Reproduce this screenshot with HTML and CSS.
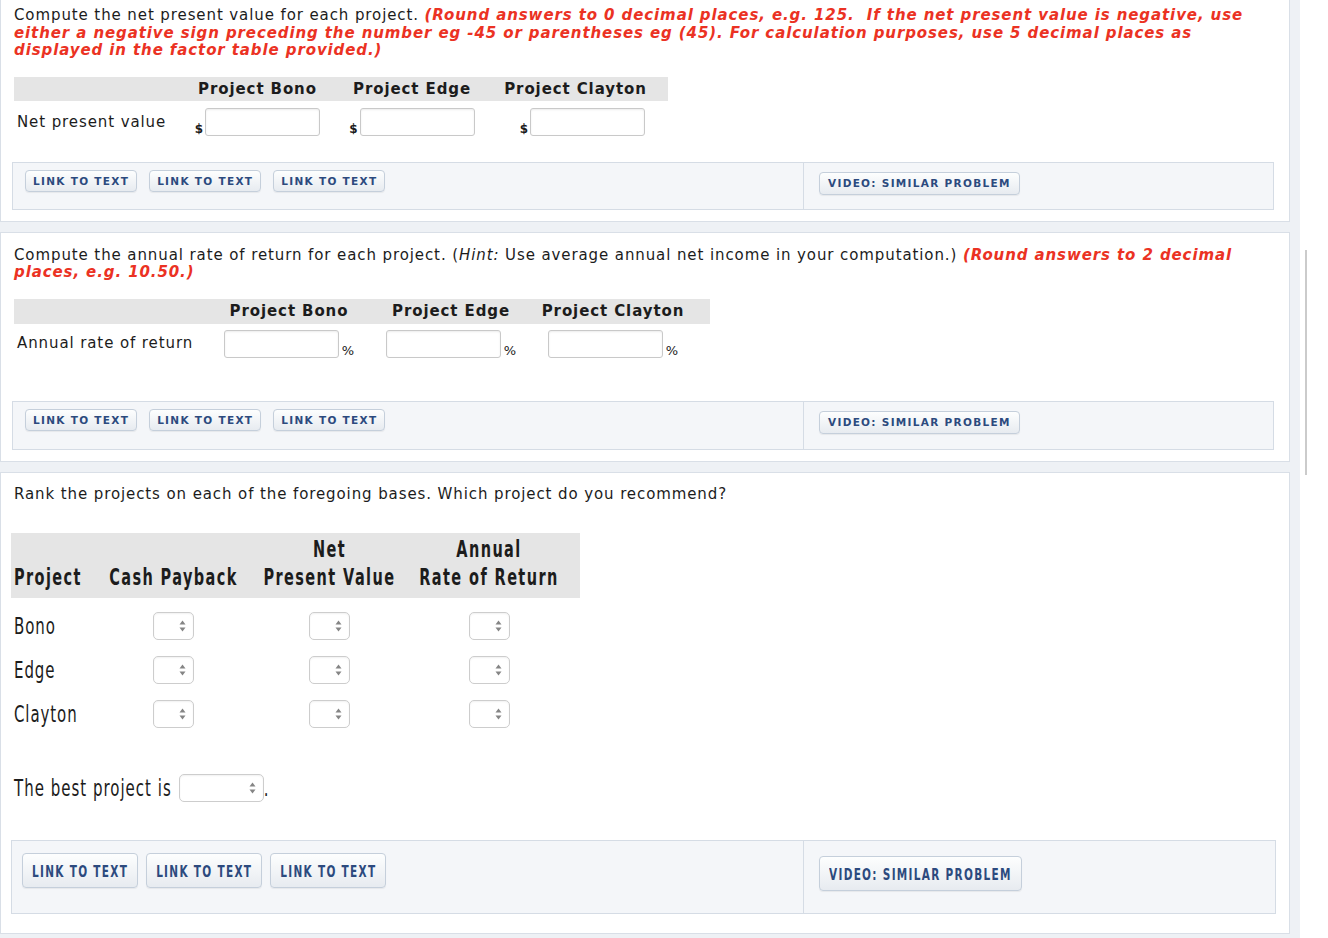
FILE: index.html
```html
<!DOCTYPE html>
<html lang="en">

<head>
    <meta charset="UTF-8">
    <meta name="viewport" content="width=device-width, initial-scale=1.0">
    <title>Capital budgeting: Bono, Edge, Clayton</title>
    <link rel="stylesheet" href="styles.css">
</head>

<body>
    <div class="page">
        <div class="main">

            <!-- Part: net present value -->
            <div class="panel panel-npv">
                <p class="prompt">Compute the net present value for each project. <em class="note">(Round answers to 0 decimal places, e.g. 125.&nbsp; If the net present value is negative, use<br>either a negative sign preceding the number eg -45 or parentheses eg (45). For calculation purposes, use 5 decimal places as<br>displayed in the factor table provided.)</em></p>

                <table class="grid grid-npv">
                    <colgroup>
                        <col class="col-label">
                        <col class="col-a">
                        <col class="col-b">
                        <col class="col-c">
                    </colgroup>
                    <thead>
                        <tr>
                            <th></th>
                            <th>Project Bono</th>
                            <th>Project Edge</th>
                            <th class="last">Project Clayton</th>
                        </tr>
                    </thead>
                    <tbody>
                        <tr>
                            <td class="row-label">Net present value</td>
                            <td><span class="cur">$</span><input type="text" class="field"></td>
                            <td><span class="cur">$</span><input type="text" class="field"></td>
                            <td class="last"><span class="cur">$</span><input type="text" class="field"></td>
                        </tr>
                    </tbody>
                </table>

                <div class="links">
                    <div class="links-text">
                        <button class="btn" type="button">LINK TO TEXT</button>
                        <button class="btn" type="button">LINK TO TEXT</button>
                        <button class="btn" type="button">LINK TO TEXT</button>
                    </div>
                    <div class="links-video">
                        <button class="btn btn-video" type="button">VIDEO: SIMILAR PROBLEM</button>
                    </div>
                </div>
            </div>

            <!-- Part: annual rate of return -->
            <div class="panel panel-arr">
                <p class="prompt">Compute the annual rate of return for each project. (<i>Hint:</i> Use average annual net income in your computation.) <em class="note">(Round answers to 2 decimal<br>places, e.g. 10.50.)</em></p>

                <table class="grid grid-arr">
                    <colgroup>
                        <col class="col-label">
                        <col class="col-a">
                        <col class="col-b">
                        <col class="col-c">
                    </colgroup>
                    <thead>
                        <tr>
                            <th></th>
                            <th>Project Bono</th>
                            <th>Project Edge</th>
                            <th class="last">Project Clayton</th>
                        </tr>
                    </thead>
                    <tbody>
                        <tr>
                            <td class="row-label">Annual rate of return</td>
                            <td><input type="text" class="field"><span class="pct">%</span></td>
                            <td><input type="text" class="field"><span class="pct">%</span></td>
                            <td class="last"><input type="text" class="field"><span class="pct">%</span></td>
                        </tr>
                    </tbody>
                </table>

                <div class="links">
                    <div class="links-text">
                        <button class="btn" type="button">LINK TO TEXT</button>
                        <button class="btn" type="button">LINK TO TEXT</button>
                        <button class="btn" type="button">LINK TO TEXT</button>
                    </div>
                    <div class="links-video">
                        <button class="btn btn-video" type="button">VIDEO: SIMILAR PROBLEM</button>
                    </div>
                </div>
            </div>

            <!-- Part: ranking -->
            <div class="panel panel-rank">
                <p class="prompt">Rank the projects on each of the foregoing bases. Which project do you recommend?</p>

                <table class="grid grid-rank">
                    <colgroup>
                        <col class="col-label">
                        <col class="col-a">
                        <col class="col-b">
                        <col class="col-c">
                    </colgroup>
                    <thead>
                        <tr>
                            <th class="th-project"><span class="tall">Project</span></th>
                            <th><span class="tall">Cash Payback</span></th>
                            <th><span class="tall">Net<br>Present Value</span></th>
                            <th class="last"><span class="tall">Annual<br>Rate of Return</span></th>
                        </tr>
                    </thead>
                    <tbody>
                        <tr>
                            <td class="row-label"><span class="tall">Bono</span></td>
                            <td><span class="picker"><svg width="7" height="12" viewBox="0 0 7 12"><path d="M3.5 0.5L6.5 4.6H0.5Z M3.5 11.5L6.5 7.4H0.5Z" fill="#858585"/></svg></span></td>
                            <td><span class="picker"><svg width="7" height="12" viewBox="0 0 7 12"><path d="M3.5 0.5L6.5 4.6H0.5Z M3.5 11.5L6.5 7.4H0.5Z" fill="#858585"/></svg></span></td>
                            <td class="last"><span class="picker"><svg width="7" height="12" viewBox="0 0 7 12"><path d="M3.5 0.5L6.5 4.6H0.5Z M3.5 11.5L6.5 7.4H0.5Z" fill="#858585"/></svg></span></td>
                        </tr>
                        <tr>
                            <td class="row-label"><span class="tall">Edge</span></td>
                            <td><span class="picker"><svg width="7" height="12" viewBox="0 0 7 12"><path d="M3.5 0.5L6.5 4.6H0.5Z M3.5 11.5L6.5 7.4H0.5Z" fill="#858585"/></svg></span></td>
                            <td><span class="picker"><svg width="7" height="12" viewBox="0 0 7 12"><path d="M3.5 0.5L6.5 4.6H0.5Z M3.5 11.5L6.5 7.4H0.5Z" fill="#858585"/></svg></span></td>
                            <td class="last"><span class="picker"><svg width="7" height="12" viewBox="0 0 7 12"><path d="M3.5 0.5L6.5 4.6H0.5Z M3.5 11.5L6.5 7.4H0.5Z" fill="#858585"/></svg></span></td>
                        </tr>
                        <tr>
                            <td class="row-label"><span class="tall">Clayton</span></td>
                            <td><span class="picker"><svg width="7" height="12" viewBox="0 0 7 12"><path d="M3.5 0.5L6.5 4.6H0.5Z M3.5 11.5L6.5 7.4H0.5Z" fill="#858585"/></svg></span></td>
                            <td><span class="picker"><svg width="7" height="12" viewBox="0 0 7 12"><path d="M3.5 0.5L6.5 4.6H0.5Z M3.5 11.5L6.5 7.4H0.5Z" fill="#858585"/></svg></span></td>
                            <td class="last"><span class="picker"><svg width="7" height="12" viewBox="0 0 7 12"><path d="M3.5 0.5L6.5 4.6H0.5Z M3.5 11.5L6.5 7.4H0.5Z" fill="#858585"/></svg></span></td>
                        </tr>
                    </tbody>
                </table>

                <div class="best">
                    <span class="tall">The best project is</span>
                    <span class="picker picker-wide"><svg width="7" height="12" viewBox="0 0 7 12"><path d="M3.5 0.5L6.5 4.6H0.5Z M3.5 11.5L6.5 7.4H0.5Z" fill="#858585"/></svg></span><span class="tall">.</span>
                </div>

                <div class="links links-tall">
                    <div class="links-text">
                        <button class="btn" type="button"><span class="tall">LINK TO TEXT</span></button>
                        <button class="btn" type="button"><span class="tall">LINK TO TEXT</span></button>
                        <button class="btn" type="button"><span class="tall">LINK TO TEXT</span></button>
                    </div>
                    <div class="links-video">
                        <button class="btn btn-video" type="button"><span class="tall">VIDEO: SIMILAR PROBLEM</span></button>
                    </div>
                </div>
            </div>

        </div>

        <!-- window scrollbar strip -->
        <div class="rail">
            <div class="rail-thumb"></div>
        </div>
    </div>
</body>

</html>
```

FILE: styles.css
```css
body {
    margin: 0;
    font-family: "DejaVu Sans", Verdana, sans-serif;
    font-size: 15px;
    letter-spacing: 0.9px;
    color: #1c1c1c;
    background-color: #fff;
}

.page {
    display: flex;
    min-height: 938px;
}

.main {
    width: 1290px;
    background-color: #eef1f5;
    display: flex;
    flex-direction: column;
    gap: 10px;
    padding-bottom: 4px;
}

.panel {
    background-color: #fff;
    border: 1px solid #d9dfe7;
    padding: 0 13px;
}

.panel-npv {
    border-top: none;
    padding-top: 7px;
    padding-bottom: 11px;
}

.panel-arr {
    padding-top: 14px;
    padding-bottom: 11px;
}

.panel-rank {
    padding-top: 13px;
    padding-bottom: 19px;
}

.prompt {
    margin: 0;
    line-height: 17.5px;
    white-space: nowrap;
}

.note {
    color: #eb3223;
    font-weight: bold;
}

/* answer tables */
.grid {
    border-collapse: collapse;
    table-layout: fixed;
}

.grid th {
    background-color: #e5e5e5;
    font-weight: bold;
    padding: 0;
    text-align: center;
}

.grid td {
    padding: 0;
    text-align: center;
    vertical-align: bottom;
}

.grid .row-label {
    text-align: left;
    vertical-align: top;
    padding-left: 3px;
}

.grid-npv {
    width: 654px;
    margin-top: 17px;
}

.grid-npv .col-label { width: 166px; }
.grid-npv .col-a { width: 155px; }
.grid-npv .col-b { width: 154px; }
.grid-npv .col-c { width: 179px; }

.grid-npv th {
    height: 24px;
}

.grid-npv th.last {
    padding-right: 6px;
}

.grid-npv td {
    padding-top: 7px;
}

.grid-npv td.last {
    padding-left: 8px;
}

.grid-npv td.row-label {
    padding-top: 12px;
}

.grid-arr {
    width: 696px;
    margin-top: 17px;
}

.grid-arr .col-label { width: 194px; }
.grid-arr .col-a { width: 162px; }
.grid-arr .col-b { width: 162px; }
.grid-arr .col-c { width: 178px; }

.grid-arr th {
    height: 25px;
}

.grid-arr .last {
    padding-right: 16px;
}

.grid-arr td {
    padding-top: 6px;
}

.grid-arr td.row-label {
    padding-top: 10px;
}

.field {
    width: 115px;
    height: 28px;
    box-sizing: border-box;
    border: 1px solid #c9c9c9;
    border-radius: 3px;
    box-shadow: inset 0 1px 2px rgba(0, 0, 0, 0.08);
    vertical-align: bottom;
    margin: 0;
}

.cur {
    display: inline-block;
    font-size: 12px;
    font-weight: bold;
    letter-spacing: 0;
    line-height: 14px;
    margin-right: 2px;
    vertical-align: bottom;
}

.pct {
    display: inline-block;
    font-size: 13px;
    letter-spacing: 0;
    line-height: 14px;
    margin-left: 3px;
    vertical-align: bottom;
}

/* link / video bar */
.links {
    display: grid;
    grid-template-columns: 790px 1fr;
    height: 48px;
    box-sizing: border-box;
    margin: 26px 2px 0 -2px;
    background-color: #f4f6f9;
    border: 1px solid #d5dce5;
}

.panel-arr .links {
    height: 49px;
    margin-top: 43px;
}

.links-text {
    display: flex;
    align-items: flex-start;
    gap: 12px;
    padding: 7px 0 0 12px;
}

.links-video {
    border-left: 1px solid #d5dce5;
    padding: 9px 0 0 15px;
}

.btn {
    height: 22px;
    padding: 0 7px;
    font-family: "DejaVu Sans", Verdana, sans-serif;
    font-size: 10.5px;
    font-weight: bold;
    letter-spacing: 1.3px;
    color: #2c4a7e;
    background: linear-gradient(#fdfefe, #e7ebf0);
    border: 1px solid #c5cfdb;
    border-radius: 4px;
    box-shadow: 0 1px 1px rgba(0, 0, 0, 0.06);
    cursor: pointer;
}

.btn-video {
    height: 23px;
    padding: 0 8px;
}

/* ranking part (taller rendering) */
.tall {
    display: inline-block;
    transform: scaleY(1.55);
}

.grid-rank {
    width: 569px;
    margin: 30px 0 0 -3px;
}

.grid-rank .col-label { width: 84px; }
.grid-rank .col-a { width: 157px; }
.grid-rank .col-b { width: 155px; }
.grid-rank .col-c { width: 173px; }

.grid-rank th {
    height: 65px;
    box-sizing: border-box;
    vertical-align: bottom;
    padding-bottom: 7px;
    line-height: 18px;
    font-size: 14.5px;
    letter-spacing: 1.4px;
}

.grid-rank th .tall {
    transform-origin: 50% 100%;
}

.grid-rank .th-project {
    text-align: left;
    padding-left: 3px;
}

.grid-rank .last {
    padding-right: 9px;
}

.grid-rank td {
    height: 44px;
    box-sizing: border-box;
    padding-top: 11px;
    vertical-align: middle;
}

.grid-rank td.row-label {
    vertical-align: middle;
    padding-top: 11px;
}

.picker {
    display: inline-flex;
    justify-content: flex-end;
    align-items: center;
    width: 41px;
    height: 28px;
    box-sizing: border-box;
    padding-right: 7px;
    background-color: #fff;
    border: 1px solid #cdcdcd;
    border-radius: 5px;
    box-shadow: inset 0 1px 2px rgba(0, 0, 0, 0.06);
    vertical-align: middle;
}

.picker-wide {
    width: 85px;
    margin-left: 7px;
}

.best {
    display: flex;
    align-items: center;
    height: 28px;
    margin-top: 44px;
    letter-spacing: 1px;
}

.links-tall {
    height: 74px;
    margin: 38px 0 0 -3px;
    grid-template-columns: 791px 1fr;
}

.links-tall .links-text {
    gap: 8px;
    padding: 12px 0 0 10px;
}

.links-tall .links-video {
    padding: 15px 0 0 15px;
}

.links-tall .btn {
    height: 35px;
    padding: 0 9px;
}

/* right-hand scrollbar strip */
.rail {
    flex: 1;
    border-left: 10px solid #eef1f5;
    background-color: #fff;
}

.rail-thumb {
    width: 2px;
    height: 225px;
    margin: 250px 0 0 5px;
    background-color: #cbcbcb;
}
```
